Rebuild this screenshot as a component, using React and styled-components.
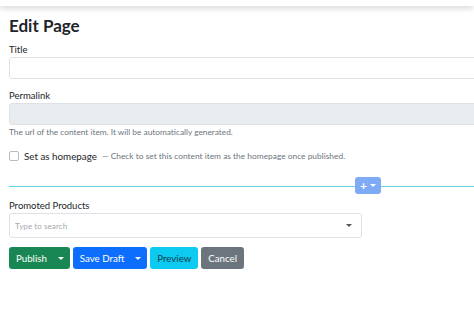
import React from 'react';
import styled, { createGlobalStyle } from 'styled-components';

const GlobalStyle = createGlobalStyle`
  html, body {
    margin: 0;
    padding: 0;
    background: #fff;
    overflow: hidden;
  }
  body {
    font-family: Lato, 'Noto Sans', sans-serif;
    color: #212529;
  }
`;

const TopBar = styled.div`
  height: 6px;
  background: #fff;
  box-shadow: 0 2px 6px rgba(0, 0, 0, 0.18);
`;

const Page = styled.div`
  width: 540px;
  padding: 8px 0 0 9px;
`;

const Heading = styled.h1`
  margin: 0 0 6px;
  font-size: 17px;
  font-weight: 700;
  line-height: 24px;
  color: #212529;
`;

const Field = styled.div`
  margin-bottom: ${(p) => p.gap || 0}px;
`;

const Label = styled.div`
  font-size: 9.5px;
  line-height: 12px;
  margin-bottom: 1px;
  color: #212529;
`;

const Input = styled.div`
  box-sizing: border-box;
  height: ${(p) => p.h || 22}px;
  width: ${(p) => p.width || '100%'};
  border: 1px solid #dee2e6;
  border-radius: 3px;
  background: ${(p) => (p.disabled ? '#e9ecef' : '#fff')};
  display: flex;
  align-items: center;
  justify-content: space-between;
  padding: 0 9px 0 5px;
`;

const Placeholder = styled.span`
  font-size: 8.2px;
  color: #a5abb1;
`;

const Caret = styled.span`
  width: 0;
  height: 0;
  border-left: 3px solid transparent;
  border-right: 3px solid transparent;
  border-top: 3.5px solid ${(p) => p.color || '#555'};
`;

const Help = styled.div`
  font-size: 8.3px;
  line-height: 11px;
  color: #6c757d;
  margin-top: 2px;
`;

const CheckRow = styled.label`
  display: flex;
  align-items: center;
  gap: 5px;
  height: 12px;
  margin: 12px 0 24px;
`;

const CheckBox = styled.span`
  box-sizing: border-box;
  width: 10px;
  height: 10px;
  border: 1px solid #b7bcc1;
  border-radius: 2px;
  background: #fff;
`;

const CheckText = styled.span`
  font-size: 9.8px;
  color: #212529;
`;

const CheckHint = styled.span`
  font-size: 8.4px;
  color: #6c757d;
`;

const Divider = styled.div`
  position: relative;
  height: 0;
  border-top: 1px solid #5fd4e4;
  margin-bottom: 13px;
  width: 100%;
`;

const AddBlock = styled.button`
  position: absolute;
  left: 346px;
  top: -10px;
  width: 26px;
  height: 17px;
  border: none;
  border-radius: 3px;
  background: #7eaaf6;
  color: #fff;
  display: flex;
  align-items: center;
  justify-content: center;
  gap: 3px;
  padding: 0;
  font-family: inherit;
  font-size: 12px;
  font-weight: 700;
  line-height: 1;
`;

const Actions = styled.div`
  display: flex;
  gap: 3px;
  margin-top: 9px;
`;

const Button = styled.button`
  box-sizing: border-box;
  height: 22px;
  margin: 0;
  border: none;
  border-radius: 3px;
  background: ${(p) => p.bg};
  color: ${(p) => p.fg || '#fff'};
  font-family: inherit;
  font-size: 9.7px;
  padding: 0 ${(p) => (p.split ? 6 : 7)}px 0 7px;
  display: flex;
  align-items: center;
  gap: ${(p) => (p.split ? 11 : 0)}px;
`;

export default function App() {
  return (
    <>
      <GlobalStyle />
      <TopBar />
      <Page>
        <Heading>Edit Page</Heading>
        <Field gap={11}>
          <Label>Title</Label>
          <Input />
        </Field>
        <Field>
          <Label>Permalink</Label>
          <Input disabled />
          <Help>The url of the content item. It will be automatically generated.</Help>
        </Field>
        <CheckRow>
          <CheckBox />
          <CheckText>Set as homepage</CheckText>
          <CheckHint>— Check to set this content item as the homepage once published.</CheckHint>
        </CheckRow>
        <Divider>
          <AddBlock>
            <span>+</span>
            <Caret color="#fff" />
          </AddBlock>
        </Divider>
        <Field>
          <Label>Promoted Products</Label>
          <Input width="353px" h={25}>
            <Placeholder>Type to search</Placeholder>
            <Caret />
          </Input>
        </Field>
        <Actions>
          <Button bg="#198754" split>
            Publish
            <Caret color="#fff" />
          </Button>
          <Button bg="#0d6efd" split>
            Save Draft
            <Caret color="#fff" />
          </Button>
          <Button bg="#0dcaf0" fg="#0b3b4a">Preview</Button>
          <Button bg="#6c757d">Cancel</Button>
        </Actions>
      </Page>
    </>
  );
}
